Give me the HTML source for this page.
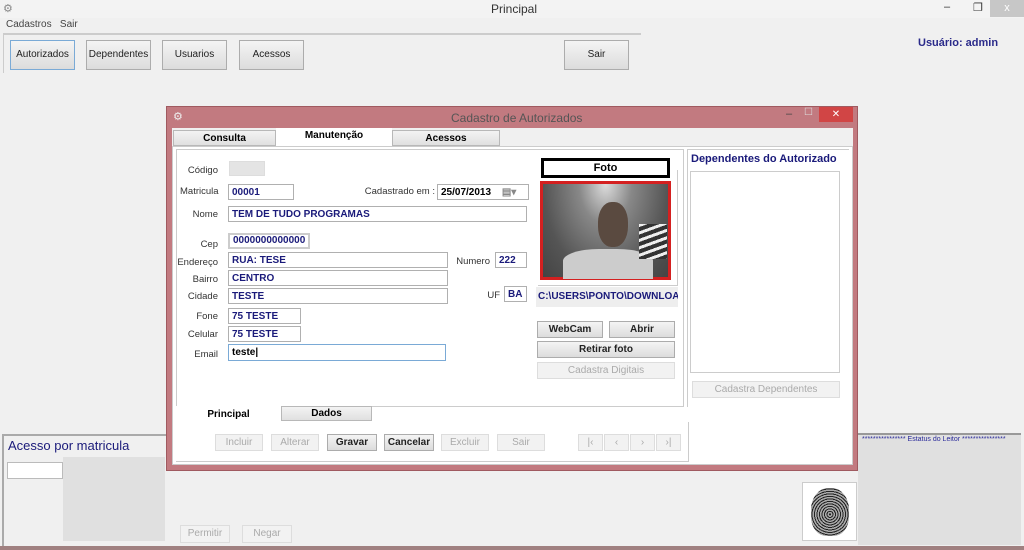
<!DOCTYPE html>
<html><head><meta charset="utf-8"><style>
*{margin:0;padding:0;box-sizing:border-box}
body{width:1024px;height:550px;background:#f0f0f0;font-family:"Liberation Sans",sans-serif;font-size:11px;position:relative;overflow:hidden;color:#000}
.a{position:absolute}
.btn{position:absolute;background:linear-gradient(#f4f4f4,#dcdcdc);border:1px solid #acacac;text-align:center;font-weight:bold;font-size:10px;color:#222}
.dis{color:#aaa;border-color:#ddd;background:#f2f2f2}
.lbl{position:absolute;font-size:9.5px;color:#333;text-align:right}
.tb{position:absolute;background:#fff;border:1px solid #b0b0b0;font-weight:bold;font-size:10px;color:#1a1a7a;padding-left:3px;line-height:15px}
.tab{position:absolute;background:linear-gradient(#f3f3f3,#e0e0e0);border:1px solid #b8b8b8;text-align:center;font-weight:bold;font-size:10px}
</style></head><body>
<div class="a" style="left:0;top:0;width:1024px;height:18px;background:#f3f3f3"></div>
<div class="a" style="left:3px;top:2px;font-size:11px;color:#888">⚙</div>
<div class="a" style="left:491px;top:2px;font-size:12px;color:#333">Principal</div>
<div class="a" style="left:944px;top:1px;font-size:11px;color:#333">–</div>
<div class="a" style="left:973px;top:1px;font-size:11px;color:#333">❐</div>
<div class="a" style="left:990px;top:0;width:34px;height:17px;background:#c7c7c7;color:#fff;text-align:center;font-size:11px;line-height:17px">x</div>
<div class="a" style="left:6px;top:19px;font-size:10px;color:#444">Cadastros&nbsp;&nbsp; Sair</div>
<div class="a" style="left:3px;top:33px;width:638px;height:40px;border-top:2px solid #ccc;border-left:1px solid #ccc"></div>
<div class="btn" style="left:10px;top:40px;width:65px;height:30px;line-height:28px;border-color:#7aaad6;font-weight:normal;font-size:10px">Autorizados</div>
<div class="btn" style="left:86px;top:40px;width:65px;height:30px;line-height:28px;font-weight:normal;font-size:10px">Dependentes</div>
<div class="btn" style="left:162px;top:40px;width:65px;height:30px;line-height:28px;font-weight:normal;font-size:10px">Usuarios</div>
<div class="btn" style="left:239px;top:40px;width:65px;height:30px;line-height:28px;font-weight:normal;font-size:10px">Acessos</div>
<div class="btn" style="left:564px;top:40px;width:65px;height:30px;line-height:28px;font-weight:normal;font-size:10px">Sair</div>
<div class="a" style="left:918px;top:37px;font-size:11px;font-weight:bold;color:#2a2a8a">Usuário: admin</div>

<div class="a" style="left:2px;top:434px;width:300px;height:113px;border-top:2px solid #aaa;border-left:2px solid #aaa;background:#f0f0f0"></div>
<div class="a" style="left:8px;top:438px;font-size:13px;color:#1a1a7a">Acesso por matricula</div>
<div class="a" style="left:7px;top:462px;width:56px;height:17px;background:#fff;border:1px solid #bbb"></div>
<div class="a" style="left:63px;top:457px;width:102px;height:84px;background:#e0e0e0"></div>
<div class="btn dis" style="left:180px;top:525px;width:50px;height:18px;line-height:16px;font-weight:normal">Permitir</div>
<div class="btn dis" style="left:242px;top:525px;width:50px;height:18px;line-height:16px;font-weight:normal">Negar</div>
<div class="a" style="left:0;top:546px;width:1024px;height:4px;background:#a08080"></div>

<div class="a" style="left:858px;top:433px;width:163px;height:112px;background:#e0e0e0;border-top:2px solid #999"></div>
<div class="a" style="left:862px;top:436px;font-size:7px;color:#2a2a9a;white-space:nowrap">**************** Estatus do Leitor ****************</div>
<div class="a" style="left:802px;top:482px;width:55px;height:59px;background:#fff;border:1px solid #ccc"><div style="margin:5px 8px;width:38px;height:48px;border-radius:45% 45% 40% 40%;background:repeating-radial-gradient(circle at 50% 55%,#222 0 1px,#aaa 1px 2.5px)"></div></div>

<div class="a" style="left:166px;top:106px;width:692px;height:365px;background:#c27a80;border:1px solid #a05a60"></div>
<div class="a" style="left:173px;top:110px;font-size:11px;color:#eee">⚙</div>
<div class="a" style="left:451px;top:111px;font-size:12px;color:#555">Cadastro de Autorizados</div>
<div class="a" style="left:786px;top:108px;font-size:11px;color:#444">–</div>
<div class="a" style="left:804px;top:107px;font-size:10px;color:#ddd">☐</div>
<div class="a" style="left:819px;top:107px;width:34px;height:15px;background:#d14545;color:#fff;text-align:center;font-size:10px;line-height:15px">✕</div>
<div class="a" style="left:172px;top:128px;width:681px;height:337px;background:#f0f0f0"></div>
<div class="tab" style="left:173px;top:130px;width:103px;height:16px;line-height:15px">Consulta</div>
<div class="a" style="left:276px;top:128px;width:116px;height:18px;background:#fff;text-align:center;font-weight:bold;font-size:10px;line-height:16px">Manutenção</div>
<div class="tab" style="left:392px;top:130px;width:108px;height:16px;line-height:15px">Acessos</div>
<div class="a" style="left:172px;top:146px;width:681px;height:319px;background:#fff;border:1px solid #ccc"></div>
<div class="a" style="left:176px;top:149px;width:508px;height:258px;border:1px solid #ccc;background:#fff"></div>
<div class="a" style="left:687px;top:149px;width:162px;height:258px;border-left:1px solid #ccc;border-top:1px solid #ccc"></div>

<div class="lbl" style="left:180px;top:165px;width:38px">Código</div>
<div class="a" style="left:229px;top:161px;width:36px;height:15px;background:#e4e4e4;border:1px solid #ddd"></div>
<div class="lbl" style="left:180px;top:186px;width:38px">Matricula</div>
<div class="tb" style="left:228px;top:184px;width:66px;height:16px">00001</div>
<div class="lbl" style="left:360px;top:186px;width:75px">Cadastrado em :</div>
<div class="tb" style="left:437px;top:184px;width:92px;height:16px;color:#000">25/07/2013 <span style="color:#888;margin-left:8px">▤▾</span></div>
<div class="lbl" style="left:180px;top:209px;width:38px">Nome</div>
<div class="tb" style="left:228px;top:206px;width:299px;height:16px">TEM DE TUDO PROGRAMAS</div>
<div class="lbl" style="left:180px;top:239px;width:38px">Cep</div>
<div class="tb" style="left:228px;top:233px;width:82px;height:16px;border:2px solid #ccc;line-height:12px">0000000000000</div>
<div class="lbl" style="left:175px;top:257px;width:43px">Endereço</div>
<div class="tb" style="left:228px;top:252px;width:220px;height:16px">RUA: TESE</div>
<div class="lbl" style="left:450px;top:256px;width:40px">Numero</div>
<div class="tb" style="left:495px;top:252px;width:32px;height:16px">222</div>
<div class="lbl" style="left:180px;top:274px;width:38px">Bairro</div>
<div class="tb" style="left:228px;top:270px;width:220px;height:16px">CENTRO</div>
<div class="lbl" style="left:180px;top:291px;width:38px">Cidade</div>
<div class="tb" style="left:228px;top:288px;width:220px;height:16px">TESTE</div>
<div class="lbl" style="left:470px;top:290px;width:30px">UF</div>
<div class="tb" style="left:504px;top:286px;width:23px;height:16px">BA</div>
<div class="lbl" style="left:180px;top:311px;width:38px">Fone</div>
<div class="tb" style="left:228px;top:308px;width:73px;height:16px">75 TESTE</div>
<div class="lbl" style="left:180px;top:329px;width:38px">Celular</div>
<div class="tb" style="left:228px;top:326px;width:73px;height:16px">75 TESTE</div>
<div class="lbl" style="left:180px;top:349px;width:38px">Email</div>
<div class="tb" style="left:228px;top:344px;width:218px;height:17px;border-color:#7aaad6;color:#000">teste|</div>

<div class="a" style="left:541px;top:158px;width:129px;height:20px;border:3px solid #000;background:#fff;text-align:center;font-weight:bold;font-size:11px;line-height:14px">Foto</div>
<div class="a" style="left:677px;top:170px;width:1px;height:115px;background:#ccc"></div>
<div class="a" style="left:540px;top:181px;width:131px;height:99px;border:3px solid #d42020;background:radial-gradient(ellipse at 50% 0%,#ddd 0,#888 30%,#555 70%,#444 100%)">
<div style="position:absolute;left:55px;top:18px;width:30px;height:45px;border-radius:45%;background:#5a4a40"></div>
<div style="position:absolute;left:20px;top:65px;width:90px;height:30px;border-radius:40% 40% 0 0;background:#ccc"></div>
<div style="position:absolute;left:96px;top:40px;width:28px;height:35px;background:repeating-linear-gradient(160deg,#eee 0 3px,#333 3px 7px)"></div></div>
<div class="a" style="left:538px;top:285px;width:140px;height:1px;background:#ccc"></div>
<div class="a" style="left:536px;top:287px;width:142px;height:20px;background:#eee;font-weight:bold;font-size:10px;color:#1a1a7a;line-height:20px;overflow:hidden;white-space:nowrap;padding-left:2px">C:\USERS\PONTO\DOWNLOAD</div>
<div class="btn" style="left:537px;top:321px;width:66px;height:17px;line-height:15px">WebCam</div>
<div class="btn" style="left:609px;top:321px;width:66px;height:17px;line-height:15px">Abrir</div>
<div class="btn" style="left:537px;top:341px;width:138px;height:17px;line-height:15px">Retirar foto</div>
<div class="btn dis" style="left:537px;top:362px;width:138px;height:17px;line-height:15px;font-weight:normal">Cadastra Digitais</div>

<div class="a" style="left:691px;top:153px;font-size:11px;font-weight:bold;color:#1a1a7a">Dependentes do Autorizado</div>
<div class="a" style="left:690px;top:171px;width:150px;height:202px;border:1px solid #ccc;background:#fff"></div>
<div class="btn dis" style="left:692px;top:381px;width:148px;height:17px;line-height:15px;font-weight:normal">Cadastra Dependentes</div>

<div class="a" style="left:176px;top:406px;width:105px;height:16px;background:#fff;text-align:center;font-weight:bold;font-size:10px;line-height:18px">Principal</div>
<div class="tab" style="left:281px;top:406px;width:91px;height:15px;line-height:13px">Dados</div>
<div class="a" style="left:176px;top:422px;width:513px;height:40px;border-right:1px solid #ccc;border-bottom:1px solid #ccc"></div>
<div class="btn dis" style="left:215px;top:434px;width:48px;height:17px;line-height:15px;font-weight:normal">Incluir</div>
<div class="btn dis" style="left:271px;top:434px;width:48px;height:17px;line-height:15px;font-weight:normal">Alterar</div>
<div class="btn" style="left:327px;top:434px;width:50px;height:17px;line-height:15px">Gravar</div>
<div class="btn" style="left:384px;top:434px;width:50px;height:17px;line-height:15px">Cancelar</div>
<div class="btn dis" style="left:441px;top:434px;width:48px;height:17px;line-height:15px;font-weight:normal">Excluir</div>
<div class="btn dis" style="left:497px;top:434px;width:48px;height:17px;line-height:15px;font-weight:normal">Sair</div>
<div class="btn dis" style="left:578px;top:434px;width:25px;height:17px;line-height:15px;font-weight:normal">|‹</div>
<div class="btn dis" style="left:604px;top:434px;width:25px;height:17px;line-height:15px;font-weight:normal">‹</div>
<div class="btn dis" style="left:630px;top:434px;width:25px;height:17px;line-height:15px;font-weight:normal">›</div>
<div class="btn dis" style="left:656px;top:434px;width:25px;height:17px;line-height:15px;font-weight:normal">›|</div>
</body></html>
